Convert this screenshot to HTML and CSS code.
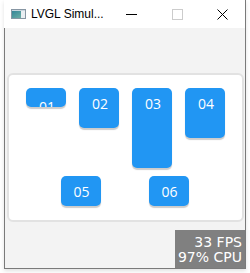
FILE: index.html
```html
<!DOCTYPE html>
<html lang="en">
<head>
    <meta charset="UTF-8">
    <meta name="viewport" content="width=device-width, initial-scale=1.0">
    <title>LVGL Simulator</title>
    <link rel="stylesheet" href="styles.css">
</head>
<body>
    <div class="window">
        <div class="titlebar">
            <svg class="app-icon" width="15" height="10" viewBox="0 0 15 10">
                <defs>
                    <linearGradient id="g" x1="0" y1="0" x2="1" y2="1">
                        <stop offset="0" stop-color="#2d7f96"/>
                        <stop offset="1" stop-color="#79b9a8"/>
                    </linearGradient>
                </defs>
                <rect x="0.5" y="0.5" width="14" height="9" fill="url(#g)" stroke="#8796a3"/>
                <rect x="10" y="1" width="4" height="8" fill="#e9eef2"/>
                <rect x="1" y="1" width="13" height="1" fill="#c9d6df"/>
            </svg>
            <span class="title">LVGL Simul...</span>
            <div class="caption-btns">
                <div class="cap-btn">
                    <svg width="11" height="10" viewBox="0 0 11 10"><line x1="0" y1="5.5" x2="11" y2="5.5" stroke="#000" stroke-width="1"/></svg>
                </div>
                <div class="cap-btn">
                    <svg width="11" height="11" viewBox="0 0 11 11"><rect x="0.5" y="0.5" width="10" height="10" fill="none" stroke="#cccccc"/></svg>
                </div>
                <div class="cap-btn">
                    <svg width="11" height="11" viewBox="0 0 11 11"><path d="M0.5 0.5 L10.5 10.5 M10.5 0.5 L0.5 10.5" stroke="#000" stroke-width="1"/></svg>
                </div>
            </div>
        </div>

        <div class="screen">
            <div class="panel">
                <div class="row row-top">
                    <div class="btn btn-01">01</div>
                    <div class="btn btn-02">02</div>
                    <div class="btn btn-03">03</div>
                    <div class="btn btn-04">04</div>
                </div>
                <div class="row row-bottom">
                    <div class="btn btn-05">05</div>
                    <div class="btn btn-06">06</div>
                </div>
            </div>

            <div class="perf">33 FPS<br>97% CPU</div>
        </div>
    </div>
</body>
</html>
```

FILE: styles.css
```css
* {
    box-sizing: border-box;
    margin: 0;
    padding: 0;
}

body {
    background-color: #ffffff;
    width: 250px;
    height: 273px;
    overflow: hidden;
}

.window {
    margin-left: 4px;
    width: 242px;
    border-right: 1px solid #7a7a7a;
    box-shadow: 0 2px 4px rgba(0,0,0,0.12);
}

.titlebar {
    height: 28px;
    background: white;
    display: flex;
    align-items: center;
    font-family: "Liberation Sans", Arial, sans-serif;
    font-size: 12px;
    color: #000;
}

.app-icon {
    margin-left: 7px;
    margin-top: -1px;
    flex: none;
}

.title {
    margin-left: 5px;
    margin-top: -1px;
}

.caption-btns {
    margin-left: auto;
    display: flex;
    height: 28px;
}

.cap-btn {
    width: 46px;
    height: 28px;
    display: flex;
    align-items: center;
    justify-content: center;
}

.cap-btn:last-child {
    width: 45px;
}

.cap-btn svg {
    display: block;
}

.screen {
    position: relative;
    width: 241px;
    height: 241px;
    background-color: #f3f3f3;
    border-left: 1px solid #7a7a7a;
    border-bottom: 1px solid #7a7a7a;
    padding: 45px 0 0 2px;
}

.panel {
    width: 237px;
    height: 149px;
    background: white;
    border: 2px solid #e2e2e2;
    border-radius: 6px;
    padding-top: 13px;
}

.row {
    display: flex;
    justify-content: center;
    align-items: flex-start;
}

.row-top {
    gap: 13px;
}

.row-bottom {
    gap: 48px;
    margin-top: 8px;
    padding-right: 2px;
}

.btn {
    width: 40px;
    background-color: #2196f3;
    color: white;
    border-radius: 5px;
    box-shadow: 0 2px 1px rgba(0,0,0,0.2);
    font-family: "Open Sans", sans-serif;
    font-size: 14px;
    line-height: 16px;
    text-align: center;
    padding-top: 8px;
    padding-left: 2px;
    overflow: hidden;
}

.btn-01 {
    height: 19px;
    padding-top: 11px;
}

.btn-02 {
    height: 40px;
}

.btn-03 {
    height: 80px;
}

.btn-04 {
    height: 50px;
}

.btn-05,
.btn-06 {
    height: 30px;
}

.perf {
    position: absolute;
    right: 0;
    bottom: 0;
    width: 70px;
    height: 38px;
    background-color: #808080;
    color: white;
    font-family: "DejaVu Sans", sans-serif;
    font-size: 14px;
    line-height: 15px;
    text-align: right;
    padding: 5px 3px 0 0;
}
```
